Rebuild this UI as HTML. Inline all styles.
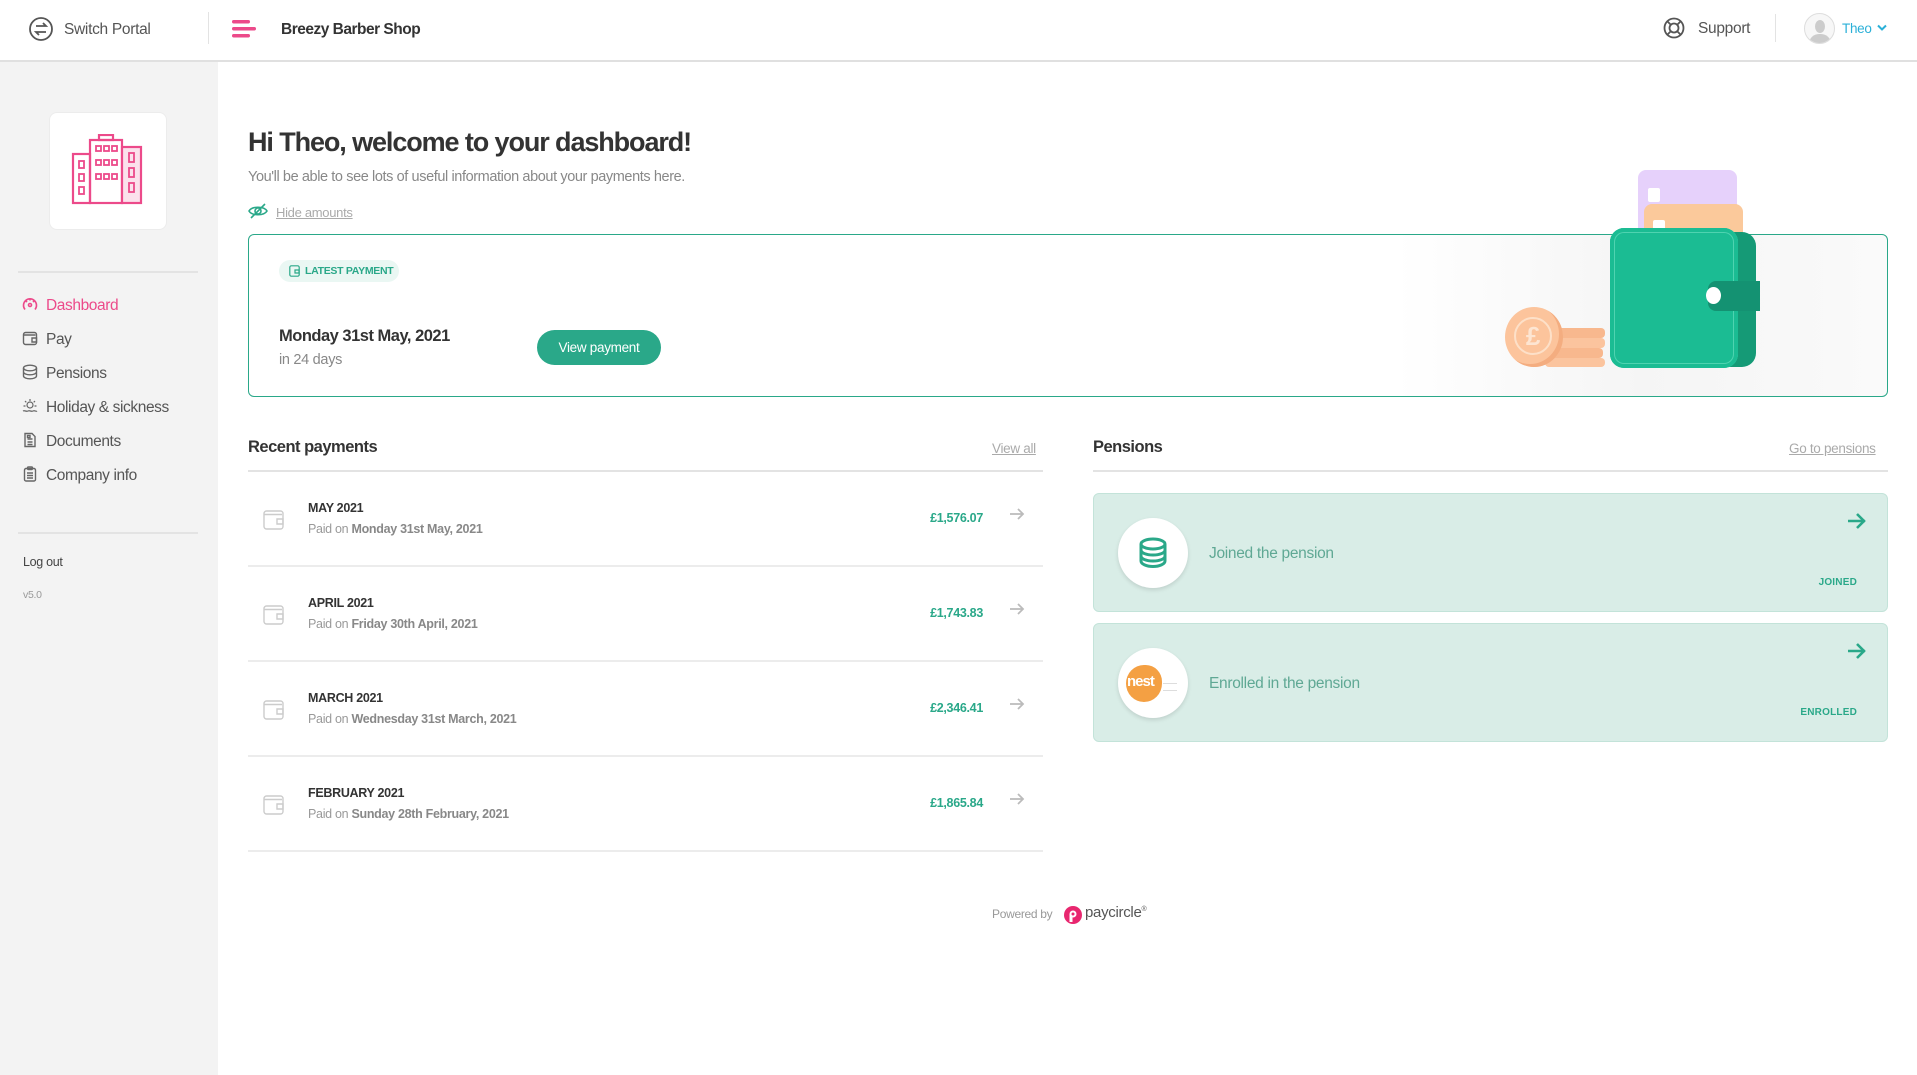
<!DOCTYPE html>
<html><head><meta charset="utf-8"><style>
*{box-sizing:border-box;margin:0;padding:0}
body{width:1917px;height:1075px;overflow:hidden;font-family:"Liberation Sans",sans-serif;background:#fff;color:#333;position:relative;letter-spacing:-0.3px}
.a{position:absolute}
.hdr{left:0;top:0;width:1917px;height:62px;border-bottom:2px solid #e0e0e0;background:#fff}
.side{left:0;top:62px;width:218px;height:1013px;background:#f3f3f3}
.nav{left:46px;font-size:15.5px;color:#555;line-height:20px;letter-spacing:-0.4px}
.ni{left:22px}
.row{left:248px;width:795px;height:95px;border-bottom:2px solid #ececec}
.rt{position:absolute;left:60px;top:29px;font-size:12.5px;font-weight:bold;color:#333}
.rs{position:absolute;left:60px;top:50px;font-size:12.5px;color:#999}
.rs b{color:#888}
.am{position:absolute;right:60px;top:39px;font-size:12.5px;font-weight:bold;color:#2aa889}
.ar{position:absolute;right:18px;top:35px}
.pc{left:1093px;width:795px;height:119px;background:#d9ede7;border:1.5px solid #c3e3d9;border-radius:6px}
.circ{position:absolute;left:24px;top:24px;width:70px;height:70px;border-radius:50%;background:#fff;box-shadow:0 2px 4px rgba(0,0,0,.12)}
.pt{position:absolute;left:115px;top:51px;font-size:15.5px;color:#5fa894}
.pl{position:absolute;right:30px;top:83px;font-size:10px;font-weight:bold;color:#2aa889;letter-spacing:.2px}
.pa{position:absolute;right:20px;top:18px}
</style></head><body>
<div class="a hdr"></div>
<svg class="a" style="left:28px;top:16px" width="26" height="26" viewBox="0 0 26 26" fill="none" stroke="#555" stroke-width="1.8"><circle cx="13" cy="13" r="11"/><path d="M8 10h10l-3-3M18 16H8l3 3"/></svg>
<div class="a" style="left:64px;top:21px;font-size:15.5px;color:#555">Switch Portal</div>
<div class="a" style="left:208px;top:12px;width:1px;height:32px;background:#e3e3e3"></div>
<svg class="a" style="left:232px;top:19px" width="26" height="20"><rect x="0" y="1" width="18" height="3.5" rx="1.7" fill="#ec4a8a"/><rect x="0" y="8" width="24" height="3.5" rx="1.7" fill="#ec4a8a"/><rect x="0" y="15" width="18" height="3.5" rx="1.7" fill="#ec4a8a"/></svg>
<div class="a" style="left:281px;top:21px;font-size:15.5px;font-weight:bold;color:#333;letter-spacing:-0.5px">Breezy Barber Shop</div>
<svg class="a" style="left:1663px;top:17px" width="22" height="22" viewBox="0 0 22 22" fill="none" stroke="#555" stroke-width="1.8"><circle cx="11" cy="11" r="9.5"/><circle cx="11" cy="11" r="4.5"/><path d="M4.3 4.3l3.5 3.5M17.7 4.3l-3.5 3.5M4.3 17.7l3.5-3.5M17.7 17.7l-3.5-3.5"/></svg>
<div class="a" style="left:1698px;top:20px;font-size:15.5px;color:#555">Support</div>
<div class="a" style="left:1775px;top:14px;width:1px;height:28px;background:#e3e3e3"></div>
<div class="a" style="left:1804px;top:13px;width:31px;height:31px;border-radius:50%;border:1.5px solid #ddd;background:#f7f7f7;overflow:hidden"><div style="margin:6px auto 0;width:10px;height:13px;border-radius:50%;background:#ccc"></div><div style="margin:1px auto 0;width:22px;height:10px;border-radius:10px 10px 0 0;background:#ccc"></div></div>
<div class="a" style="left:1842px;top:21px;font-size:13.5px;color:#2bb0d8">Theo</div>
<svg class="a" style="left:1877px;top:24px" width="10" height="8"><path d="M1 1.5l4 4 4-4" stroke="#2bb0d8" stroke-width="2" fill="none"/></svg>

<div class="a side"></div>
<div class="a" style="left:49px;top:112px;width:118px;height:118px;background:#fff;border-radius:8px;border:1px solid #ececec"></div>
<svg class="a" style="left:70px;top:134px" width="76" height="76" viewBox="0 0 76 76" fill="none" stroke="#ec4a8a" stroke-width="2.2"><rect x="20" y="6" width="32" height="63"/><rect x="29" y="1" width="14" height="5"/><rect x="3" y="20" width="17" height="49"/><rect x="52" y="13" width="19" height="56" fill="#fbe1ec"/><g stroke-width="1.8"><rect x="26" y="12" width="5" height="5"/><rect x="34" y="12" width="5" height="5"/><rect x="42" y="12" width="5" height="5"/><rect x="26" y="26" width="5" height="5"/><rect x="34" y="26" width="5" height="5"/><rect x="42" y="26" width="5" height="5"/><rect x="26" y="40" width="5" height="5"/><rect x="34" y="40" width="5" height="5"/><rect x="42" y="40" width="5" height="5"/><rect x="9" y="27" width="5" height="7"/><rect x="9" y="40" width="5" height="7"/><rect x="9" y="53" width="5" height="7"/><rect x="59" y="19" width="5" height="9"/><rect x="59" y="34" width="5" height="9"/><rect x="59" y="49" width="5" height="9"/></g></svg>
<div class="a" style="left:18px;top:271px;width:180px;height:2px;background:#e3e3e3"></div>
<svg class="a ni" style="top:296px" width="16" height="16" viewBox="0 0 16 16" fill="none" stroke="#ec4a8a" stroke-width="1.6"><path d="M3 13.5A6.5 6.5 0 1 1 13 13.5"/><circle cx="8" cy="9" r="1.5"/><path d="M8 3v1.5M4 5l1 1M12 5l-1 1"/></svg>
<div class="a nav" style="top:296px;color:#ec4a8a">Dashboard</div>
<svg class="a ni" style="top:330px" width="16" height="16" viewBox="0 0 16 16" fill="none" stroke="#666" stroke-width="1.4"><rect x="1.5" y="2.5" width="13" height="12" rx="2"/><path d="M1.5 5h12M10 8h4.5v4H10z"/></svg>
<div class="a nav" style="top:330px">Pay</div>
<svg class="a ni" style="top:364px" width="16" height="16" viewBox="0 0 16 16" fill="none" stroke="#666" stroke-width="1.4"><ellipse cx="8" cy="4" rx="6.5" ry="2.8"/><path d="M1.5 4v8c0 1.5 3 2.8 6.5 2.8s6.5-1.3 6.5-2.8V4M1.5 8c0 1.5 3 2.8 6.5 2.8s6.5-1.3 6.5-2.8"/></svg>
<div class="a nav" style="top:364px">Pensions</div>
<svg class="a ni" style="top:398px" width="16" height="16" viewBox="0 0 16 16" fill="none" stroke="#666" stroke-width="1.2"><circle cx="8" cy="7" r="3"/><path d="M8 1v2M3 3l1.3 1.3M13 3l-1.3 1.3M1.5 8h2M12.5 8h2M1 13c2-1 3 1 5 0s3 1 5 0 3 1 4 0"/></svg>
<div class="a nav" style="top:398px">Holiday &amp; sickness</div>
<svg class="a ni" style="top:432px" width="16" height="16" viewBox="0 0 16 16" fill="none" stroke="#666" stroke-width="1.4"><path d="M3 1.5h7l3 3v10H3z"/><path d="M5.5 7h5M5.5 10h5M5.5 12.5h5"/><rect x="5.5" y="3.5" width="2.5" height="2"/></svg>
<div class="a nav" style="top:432px">Documents</div>
<svg class="a ni" style="top:466px" width="16" height="16" viewBox="0 0 16 16" fill="none" stroke="#666" stroke-width="1.4"><rect x="2.5" y="2.5" width="11" height="12.5" rx="1.5"/><rect x="5.5" y="1" width="5" height="2.5" rx="1"/><path d="M5 7h6M5 9.5h6M5 12h6"/></svg>
<div class="a nav" style="top:466px">Company info</div>
<div class="a" style="left:18px;top:532px;width:180px;height:2px;background:#e3e3e3"></div>
<div class="a" style="left:23px;top:555px;font-size:12.5px;color:#444">Log out</div>
<div class="a" style="left:23px;top:589px;font-size:10.5px;color:#999">v5.0</div>

<div class="a" style="left:248px;top:127px;font-size:27px;font-weight:bold;color:#333;letter-spacing:-1.1px">Hi Theo, welcome to your dashboard!</div>
<div class="a" style="left:248px;top:169px;font-size:14.5px;color:#888;letter-spacing:-0.4px">You'll be able to see lots of useful information about your payments here.</div>
<svg class="a" style="left:248px;top:203px" width="20" height="16" viewBox="0 0 20 16" fill="none" stroke="#2aa889" stroke-width="1.6"><path d="M1 8c3-5 15-5 18 0-3 5-15 5-18 0z"/><circle cx="10" cy="8" r="3"/><path d="M3 15L17 1"/></svg>
<div class="a" style="left:276px;top:205px;font-size:13px;color:#aaa;text-decoration:underline">Hide amounts</div>

<div class="a" style="left:248px;top:234px;width:1640px;height:163px;border:1.5px solid #2aa889;border-radius:6px;background:linear-gradient(90deg,#fff 0%,#fff 70%,#f5f5f5 85%,#fafafa 100%);overflow:hidden"></div>
<div class="a" style="left:279px;top:260px;width:120px;height:22px;border-radius:11px;background:#eaf7f3"></div>
<svg class="a" style="left:289px;top:265px" width="11" height="12" viewBox="0 0 11 12" fill="none" stroke="#2aa889" stroke-width="1.2"><rect x=".8" y=".8" width="9.4" height="10.4" rx="1.5"/><path d="M6 5h4v3H6z"/></svg>
<div class="a" style="left:305px;top:265px;font-size:10.5px;font-weight:bold;color:#2aa889">LATEST PAYMENT</div>
<div class="a" style="left:279px;top:327px;font-size:16.5px;font-weight:bold;color:#333;letter-spacing:-0.5px">Monday 31st May, 2021</div>
<div class="a" style="left:279px;top:352px;font-size:14.5px;color:#888">in 24 days</div>
<div class="a" style="left:537px;top:330px;width:124px;height:35px;border-radius:18px;background:#2aa889;color:#fff;font-size:13.5px;text-align:center;line-height:35px">View payment</div>
<!-- illustration -->
<div class="a" style="left:1638px;top:170px;width:99px;height:85px;border-radius:8px;background:#e6d1fb"></div>
<div class="a" style="left:1648px;top:188px;width:12px;height:14px;border-radius:2px;background:#fff"></div>
<div class="a" style="left:1644px;top:204px;width:99px;height:90px;border-radius:8px;background:#fbc99b"></div>
<div class="a" style="left:1653px;top:220px;width:12px;height:12px;border-radius:2px;background:#fff"></div>
<div class="a" style="left:1700px;top:232px;width:56px;height:135px;border-radius:0 14px 14px 0;background:#159a76"></div>
<div class="a" style="left:1610px;top:228px;width:128px;height:140px;border-radius:14px;background:#1bbc93;box-shadow:inset 0 0 0 4px #1bbc93,inset 0 0 0 5px #4fd3b0"></div>
<div class="a" style="left:1708px;top:281px;width:52px;height:30px;border-radius:8px 0 0 8px;background:#149272"></div>
<div class="a" style="left:1706px;top:287px;width:15px;height:17px;border-radius:50%;background:#fff"></div>
<div class="a" style="left:1545px;top:328px;width:60px;height:10px;border-radius:4px;background:#f8b88e"></div>
<div class="a" style="left:1545px;top:338px;width:60px;height:10px;border-radius:4px;background:#fbc49e"></div>
<div class="a" style="left:1545px;top:348px;width:58px;height:10px;border-radius:4px;background:#f8b88e"></div>
<div class="a" style="left:1545px;top:358px;width:60px;height:9px;border-radius:4px;background:#fbc49e"></div>
<div class="a" style="left:1505px;top:307px;width:58px;height:60px;border-radius:50%;background:#fcc49c;box-shadow:inset -4px -3px 0 #f4ad80"></div>
<div class="a" style="left:1514px;top:317px;width:38px;height:38px;border-radius:50%;border:2px solid #fde0c8;color:#fde5d2;font-size:26px;text-align:center;line-height:34px;font-weight:bold">£</div>

<div class="a" style="left:248px;top:438px;font-size:16.5px;font-weight:bold;color:#333;letter-spacing:-0.5px">Recent payments</div>
<div class="a" style="left:992px;top:441px;font-size:13.5px;color:#aaa;text-decoration:underline">View all</div>
<div class="a" style="left:248px;top:470px;width:795px;height:2px;background:#e3e3e3"></div>

<div class="a" style="left:1093px;top:438px;font-size:16.5px;font-weight:bold;color:#333;letter-spacing:-0.5px">Pensions</div>
<div class="a" style="left:1789px;top:441px;font-size:13.5px;color:#aaa;text-decoration:underline">Go to pensions</div>
<div class="a" style="left:1093px;top:470px;width:795px;height:2px;background:#e3e3e3"></div>

<div class="a row" style="top:472px"><svg class="a" style="left:15px;top:38px" width="22" height="20" viewBox="0 0 22 20" fill="none" stroke="#ccc" stroke-width="1.4"><rect x="1" y="1" width="19" height="18" rx="2.5"/><path d="M1 4.5h18M14 9h6v5h-6z"/></svg><div class="rt">MAY 2021</div><div class="rs">Paid on <b>Monday 31st May, 2021</b></div><div class="am">£1,576.07</div><svg class="ar" width="16" height="14"><path d="M1 7h13M9 2l5 5-5 5" stroke="#bbb" stroke-width="1.8" fill="none"/></svg></div>
<div class="a row" style="top:567px"><svg class="a" style="left:15px;top:38px" width="22" height="20" viewBox="0 0 22 20" fill="none" stroke="#ccc" stroke-width="1.4"><rect x="1" y="1" width="19" height="18" rx="2.5"/><path d="M1 4.5h18M14 9h6v5h-6z"/></svg><div class="rt">APRIL 2021</div><div class="rs">Paid on <b>Friday 30th April, 2021</b></div><div class="am">£1,743.83</div><svg class="ar" width="16" height="14"><path d="M1 7h13M9 2l5 5-5 5" stroke="#bbb" stroke-width="1.8" fill="none"/></svg></div>
<div class="a row" style="top:662px"><svg class="a" style="left:15px;top:38px" width="22" height="20" viewBox="0 0 22 20" fill="none" stroke="#ccc" stroke-width="1.4"><rect x="1" y="1" width="19" height="18" rx="2.5"/><path d="M1 4.5h18M14 9h6v5h-6z"/></svg><div class="rt">MARCH 2021</div><div class="rs">Paid on <b>Wednesday 31st March, 2021</b></div><div class="am">£2,346.41</div><svg class="ar" width="16" height="14"><path d="M1 7h13M9 2l5 5-5 5" stroke="#bbb" stroke-width="1.8" fill="none"/></svg></div>
<div class="a row" style="top:757px"><svg class="a" style="left:15px;top:38px" width="22" height="20" viewBox="0 0 22 20" fill="none" stroke="#ccc" stroke-width="1.4"><rect x="1" y="1" width="19" height="18" rx="2.5"/><path d="M1 4.5h18M14 9h6v5h-6z"/></svg><div class="rt">FEBRUARY 2021</div><div class="rs">Paid on <b>Sunday 28th February, 2021</b></div><div class="am">£1,865.84</div><svg class="ar" width="16" height="14"><path d="M1 7h13M9 2l5 5-5 5" stroke="#bbb" stroke-width="1.8" fill="none"/></svg></div>

<div class="a pc" style="top:493px"><div class="circ"><svg style="position:absolute;left:20px;top:19px" width="30" height="32" viewBox="0 0 30 32" fill="none" stroke="#2aa889" stroke-width="3"><ellipse cx="15" cy="7" rx="12" ry="5"/><path d="M3 7v17c0 3 5.5 5.5 12 5.5s12-2.5 12-5.5V7M3 13c0 3 5.5 5 12 5s12-2 12-5M3 19c0 3 5.5 5 12 5s12-2 12-5"/></svg></div><div class="pt">Joined the pension</div><svg class="pa" width="20" height="18"><path d="M1 9h17M10 2l7 7-7 7" stroke="#2aa889" stroke-width="2.6" fill="none"/></svg><div class="pl">JOINED</div></div>
<div class="a pc" style="top:623px"><div class="circ"><div style="position:absolute;left:8px;top:17px;width:36px;height:37px;border-radius:50% 45% 50% 50%;background:#f4a043"></div><div style="position:absolute;left:9px;top:25px;font-size:15px;font-weight:bold;color:#fff;letter-spacing:-1px">nest</div><div style="position:absolute;left:45px;top:35px;width:14px;height:8px;border-top:1px solid #ddd;border-bottom:1px solid #ddd"></div></div><div class="pt">Enrolled in the pension</div><svg class="pa" width="20" height="18"><path d="M1 9h17M10 2l7 7-7 7" stroke="#2aa889" stroke-width="2.6" fill="none"/></svg><div class="pl">ENROLLED</div></div>

<div class="a" style="left:992px;top:907px;font-size:12px;color:#999">Powered by</div>
<svg class="a" style="left:1063px;top:905px" width="20" height="20" viewBox="0 0 20 20"><circle cx="10" cy="10" r="9" fill="#e8276f"/><circle cx="10" cy="9" r="3.5" fill="#fff"/><rect x="6.5" y="9" width="3" height="8" fill="#fff"/><circle cx="10" cy="9" r="1.5" fill="#e8276f"/></svg>
<div class="a" style="left:1085px;top:904px;font-size:15px;color:#555;letter-spacing:-.3px">paycircle<sup style="font-size:7px">®</sup></div>
</body></html>
